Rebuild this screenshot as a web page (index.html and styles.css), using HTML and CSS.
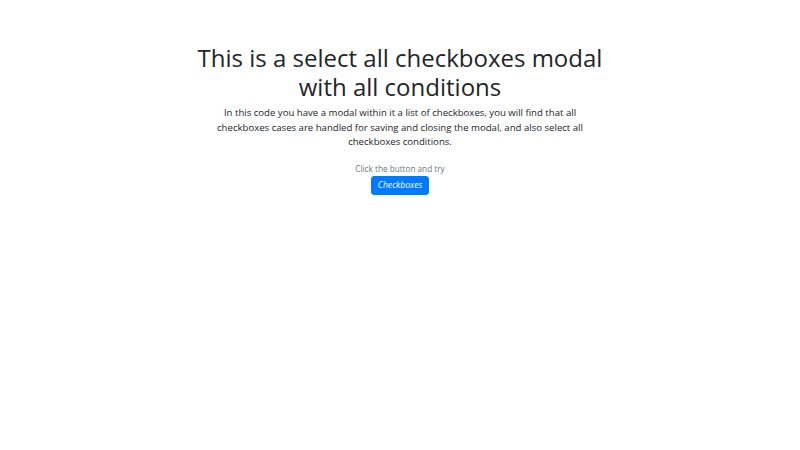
FILE: index.html
```html
<!DOCTYPE html>
<html>
<head>
<title>Select all checkboxes modal</title>
<meta name="viewport" content="width=device-width, initial-scale=1.0">
<link rel="stylesheet" href="styles.css">
</head>
<body>

<div class="intro">
  <h1>This is a select all checkboxes modal with all conditions</h1>
  <p class="lead">In this code you have a modal within it a list of checkboxes, you will find that all checkboxes cases are handled for saving and closing the modal, and also select all checkboxes conditions.</p>
  <div class="try">
    <small>Click the button and try</small>
    <button type="button" class="btn-primary">Checkboxes</button>
  </div>
</div>

</body>
</html>
```

FILE: styles.css
```css
body {
  font-family: "Open Sans", "Noto Sans", Arial, sans-serif;
  color: #212529;
  background-color: #fff;
  margin: 0;
}
.intro {
  width: 410px;
  margin: 43px auto 0;
  text-align: center;
}
h1 {
  font-size: 24px;
  font-weight: 400;
  line-height: 29px;
  margin: 0 0 5px;
}
.lead {
  max-width: 380px;
  margin: 0 auto 13px;
  font-size: 9.6px;
  line-height: 14.5px;
}
.try {
  display: flex;
  flex-direction: column;
  align-items: center;
  gap: 2px;
}
.try small {
  font-size: 8.2px;
  color: #6c757d;
}
.btn-primary {
  font-family: inherit;
  font-size: 8.6px;
  font-style: italic;
  color: #fff;
  background-color: #007bff;
  border: 1px solid #007bff;
  border-radius: 3px;
  height: 19px;
  padding: 0 6px;
  cursor: pointer;
}
```
